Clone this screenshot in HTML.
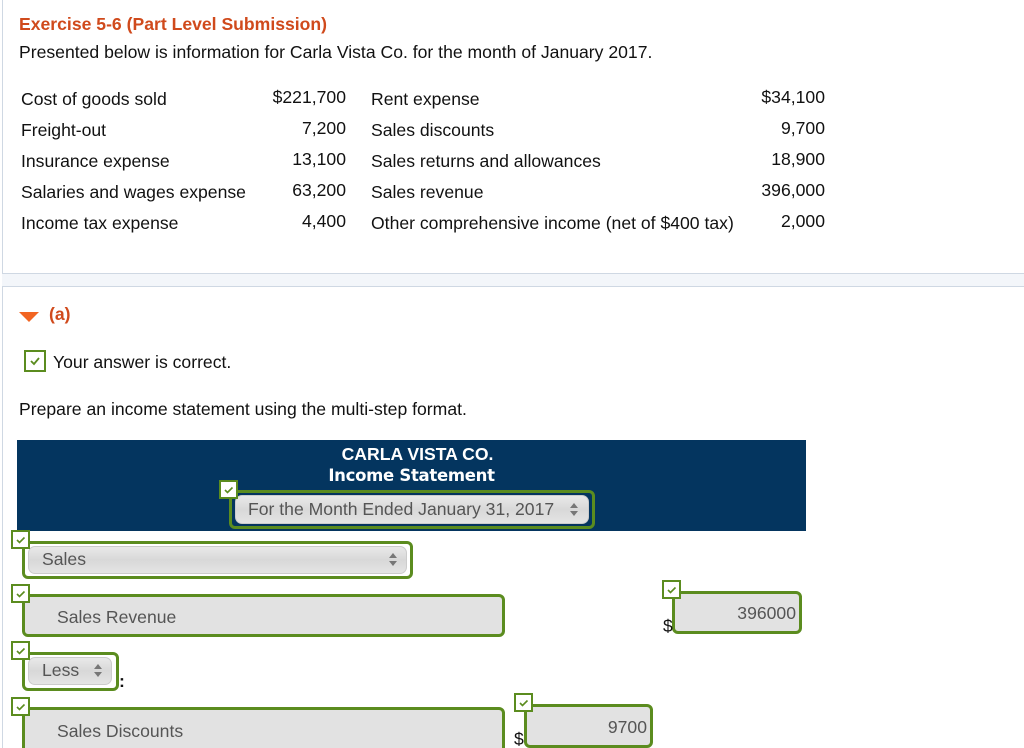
<!DOCTYPE html>
<html><head><meta charset="utf-8"><style>
*{margin:0;padding:0;box-sizing:border-box}
html,body{width:1024px;height:748px;overflow:hidden}
body{background:#fff;font-family:"Liberation Sans",Arial,sans-serif;font-size:17.6px;color:#111;position:relative}
.a{position:absolute;white-space:nowrap}
.r{text-align:right}
.chk{position:absolute;width:19px;height:19px;border:2px solid #5b8c1f;background:#fff}
.chk svg{position:absolute;left:2px;top:2px}
.out{position:absolute;border:3px solid #5b8c1f;border-radius:6px}
.sel{position:absolute;border-radius:7px;background:linear-gradient(#e9e9e9,#d8d8d8 50%,#e4e4e4);border:1px solid #ccc;color:#555;font-size:17.6px;white-space:nowrap}
.box{position:absolute;border:3px solid #5b8c1f;border-radius:6px;background:#e2e2e2;color:#555;font-size:17.6px}
.arr{position:absolute;width:0;height:0;border-left:4px solid transparent;border-right:4px solid transparent}
</style></head><body>
<div class="a" style="left:2px;top:0;width:1px;height:274px;background:#cfd8e3"></div>
<div class="a" style="left:2px;top:273px;width:1022px;height:14px;background:#f3f6fa;border-top:1px solid #cfd8e3;border-bottom:1px solid #cfd8e3"></div>
<div class="a" style="left:2px;top:287px;width:1px;height:461px;background:#cfd8e3"></div>

<div class="a" style="left:19px;top:14px;font-weight:bold;color:#d04a1c">Exercise 5-6 (Part Level Submission)</div>
<div class="a" style="left:19px;top:42px">Presented below is information for Carla Vista Co. for the month of January 2017.</div>

<div class="a" style="left:21px;top:89px">Cost of goods sold</div>
<div class="a" style="left:21px;top:120px">Freight-out</div>
<div class="a" style="left:21px;top:151px">Insurance expense</div>
<div class="a" style="left:21px;top:182px">Salaries and wages expense</div>
<div class="a" style="left:21px;top:213px">Income tax expense</div>
<div class="a r" style="left:226px;width:120px;top:87px">$221,700</div>
<div class="a r" style="left:226px;width:120px;top:118px">7,200</div>
<div class="a r" style="left:226px;width:120px;top:149px">13,100</div>
<div class="a r" style="left:226px;width:120px;top:180px">63,200</div>
<div class="a r" style="left:226px;width:120px;top:211px">4,400</div>
<div class="a" style="left:371px;top:89px">Rent expense</div>
<div class="a" style="left:371px;top:120px">Sales discounts</div>
<div class="a" style="left:371px;top:151px">Sales returns and allowances</div>
<div class="a" style="left:371px;top:182px">Sales revenue</div>
<div class="a" style="left:371px;top:213px">Other comprehensive income (net of $400 tax)</div>
<div class="a r" style="left:705px;width:120px;top:87px">$34,100</div>
<div class="a r" style="left:705px;width:120px;top:118px">9,700</div>
<div class="a r" style="left:705px;width:120px;top:149px">18,900</div>
<div class="a r" style="left:705px;width:120px;top:180px">396,000</div>
<div class="a r" style="left:705px;width:120px;top:211px">2,000</div>

<div class="a" style="left:19px;top:312px;width:0;height:0;border-left:10px solid transparent;border-right:10px solid transparent;border-top:10px solid #f26522"></div>
<div class="a" style="left:49px;top:304px;font-weight:bold;color:#d04a1c">(a)</div>
<div class="chk" style="left:24px;top:350px;width:22px;height:22px"><svg width="14" height="14" viewBox="0 0 14 14"><path d="M3 7l3 3 5-6" stroke="#5b8c1f" stroke-width="1.8" fill="none"/></svg></div>
<div class="a" style="left:53px;top:352px">Your answer is correct.</div>
<div class="a" style="left:19px;top:399px">Prepare an income statement using the multi-step format.</div>

<div class="a" style="left:17px;top:440px;width:789px;height:91px;background:#04355f"></div>
<div class="a" style="left:17px;width:789px;top:444px;text-align:center;color:#fff;font-weight:bold;font-size:17.6px;padding-left:12px">CARLA VISTA CO.</div>
<div class="a" style="left:17px;width:789px;top:466px;text-align:center;color:#fff;font-weight:bold;font-size:16.5px;font-family:'DejaVu Sans',sans-serif;letter-spacing:-0.3px">Income Statement</div>
<div class="out" style="left:229px;top:490px;width:366px;height:39px"></div>
<div class="sel" style="left:235px;top:495px;width:354px;height:29px;padding:3px 0 0 12px">For the Month Ended January 31, 2017</div>
<div class="arr" style="left:570px;top:503px;border-bottom:5px solid #777"></div>
<div class="arr" style="left:570px;top:511px;border-top:5px solid #777"></div>
<div class="chk" style="left:219px;top:480px"><svg width="12" height="12" viewBox="0 0 12 12"><path d="M2 6l2.5 2.5 5-5" stroke="#5b8c1f" stroke-width="1.6" fill="none"/></svg></div>

<div class="out" style="left:22px;top:541px;width:391px;height:38px"></div>
<div class="sel" style="left:28px;top:546px;width:379px;height:28px;padding:2px 0 0 13px">Sales</div>
<div class="arr" style="left:389px;top:553px;border-bottom:5px solid #777"></div>
<div class="arr" style="left:389px;top:561px;border-top:5px solid #777"></div>
<div class="chk" style="left:11px;top:530px"><svg width="12" height="12" viewBox="0 0 12 12"><path d="M2 6l2.5 2.5 5-5" stroke="#5b8c1f" stroke-width="1.6" fill="none"/></svg></div>

<div class="box" style="left:22px;top:594px;width:483px;height:43px;padding:10px 0 0 32px">Sales Revenue</div>
<div class="chk" style="left:11px;top:584px"><svg width="12" height="12" viewBox="0 0 12 12"><path d="M2 6l2.5 2.5 5-5" stroke="#5b8c1f" stroke-width="1.6" fill="none"/></svg></div>

<div class="box" style="left:672px;top:591px;width:130px;height:43px;padding:9px 3px 0 0;text-align:right">396000</div>
<div class="a" style="left:663px;top:616px">$</div>
<div class="chk" style="left:662px;top:580px"><svg width="12" height="12" viewBox="0 0 12 12"><path d="M2 6l2.5 2.5 5-5" stroke="#5b8c1f" stroke-width="1.6" fill="none"/></svg></div>

<div class="out" style="left:22px;top:652px;width:97px;height:39px"></div>
<div class="sel" style="left:28px;top:657px;width:84px;height:28px;padding:2px 0 0 13px">Less</div>
<div class="arr" style="left:94px;top:664px;border-bottom:5px solid #777"></div>
<div class="arr" style="left:94px;top:672px;border-top:5px solid #777"></div>
<div class="a" style="left:119px;top:671px;font-weight:bold">:</div>
<div class="chk" style="left:11px;top:641px"><svg width="12" height="12" viewBox="0 0 12 12"><path d="M2 6l2.5 2.5 5-5" stroke="#5b8c1f" stroke-width="1.6" fill="none"/></svg></div>

<div class="box" style="left:22px;top:707px;width:483px;height:50px;padding:11px 0 0 32px">Sales Discounts</div>
<div class="chk" style="left:11px;top:697px"><svg width="12" height="12" viewBox="0 0 12 12"><path d="M2 6l2.5 2.5 5-5" stroke="#5b8c1f" stroke-width="1.6" fill="none"/></svg></div>

<div class="box" style="left:524px;top:704px;width:129px;height:44px;padding:10px 3px 0 0;text-align:right">9700</div>
<div class="a" style="left:514px;top:729px">$</div>
<div class="chk" style="left:514px;top:693px"><svg width="12" height="12" viewBox="0 0 12 12"><path d="M2 6l2.5 2.5 5-5" stroke="#5b8c1f" stroke-width="1.6" fill="none"/></svg></div>
</body></html>
